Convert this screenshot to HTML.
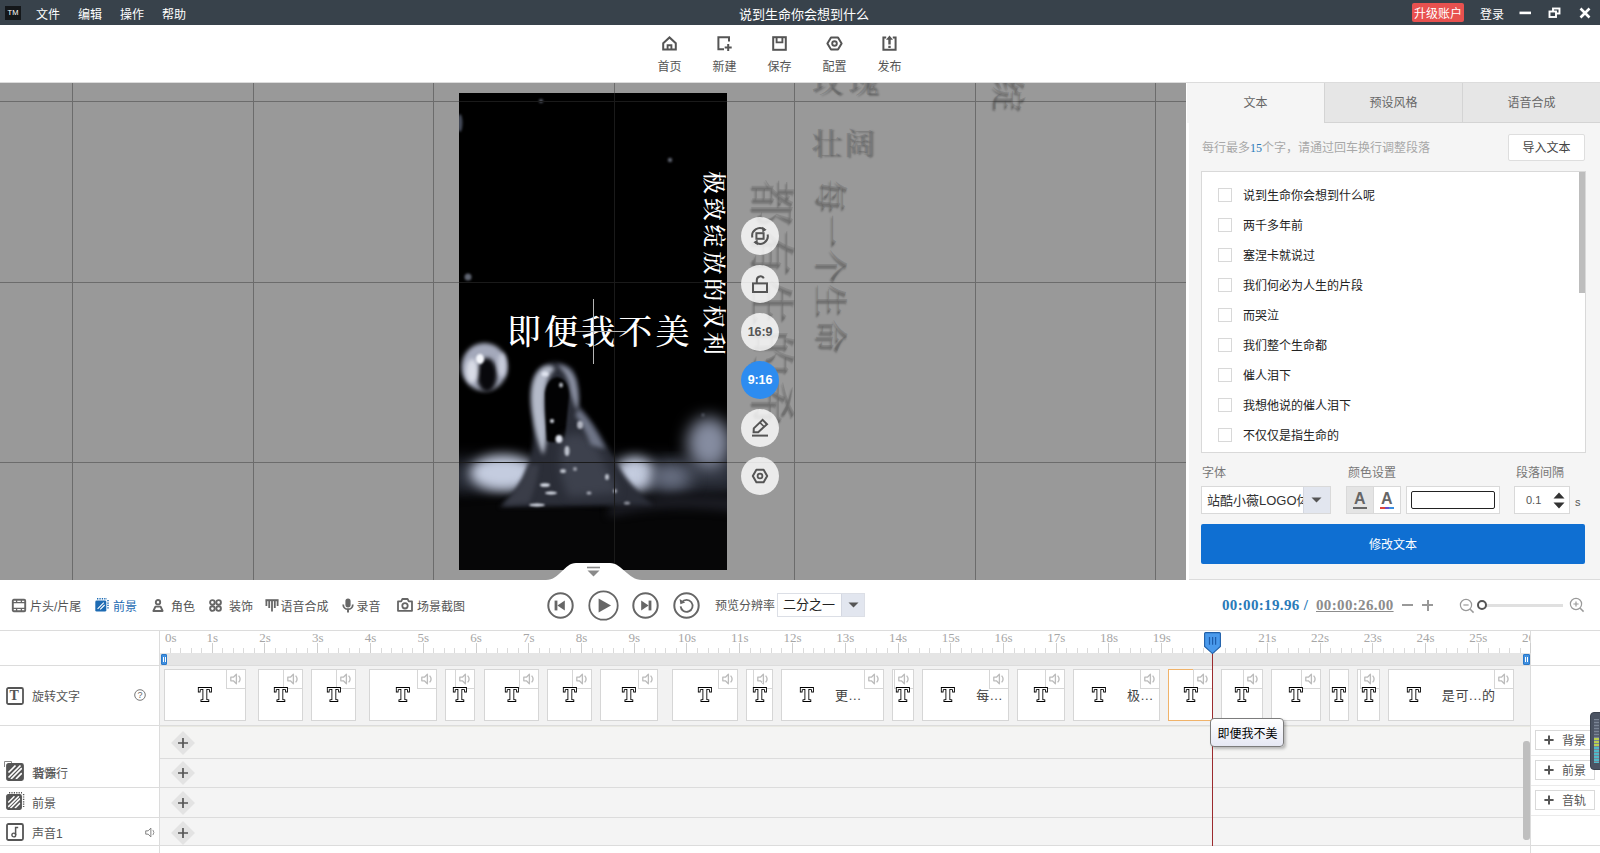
<!DOCTYPE html>
<html lang="zh-CN">
<head>
<meta charset="utf-8">
<title>说到生命你会想到什么</title>
<style>
*{box-sizing:border-box;margin:0;padding:0}
html,body{width:1600px;height:853px;overflow:hidden;background:#fff}
body{position:relative;font-family:"Liberation Sans","Noto Sans CJK SC",sans-serif;font-size:12px;color:#555;line-height:1}
.abs{position:absolute}
.t{position:absolute;white-space:nowrap;line-height:1}
svg{position:absolute;overflow:visible}
/* title bar */
#titlebar{position:absolute;left:0;top:0;width:1600px;height:25px;background:#38424b}
#titlebar .t{color:#fff;font-size:12px;top:8.5px}
#logo{position:absolute;left:5px;top:6px;width:16px;height:14px;background:#14171a;color:#fff;font-size:7.5px;text-align:center;line-height:14px;letter-spacing:.2px;font-family:"Liberation Sans",sans-serif}
#upgrade{position:absolute;left:1412px;top:3px;width:52px;height:19px;background:#e8514f;border-radius:2px;color:#fff;font-size:12px;line-height:22px;text-align:center}
/* main toolbar */
#toolbar{position:absolute;left:0;top:25px;width:1600px;height:58px;background:#fff;border-bottom:1px solid #dcdcdc}
.tb{position:absolute;top:0;width:55px;height:57px;text-align:center}
.tb svg{left:19px;top:10px;width:17px;height:17px}
.tb span{position:absolute;left:0;width:55px;top:36px;font-size:12px;color:#555;text-align:center}
/* stage */
#stage{position:absolute;left:0;top:83px;width:1186px;height:497px;background:#999;overflow:hidden}
#canvas{position:absolute;left:459px;top:10px;width:268px;height:477px;background:#000;overflow:hidden}
.rb{position:absolute;left:741px;width:38px;height:38px;border-radius:50%;background:rgba(255,255,255,.8)}
.rb svg{left:9px;top:9px;width:20px;height:20px}
.rb.txt{font-family:"Liberation Sans",sans-serif;font-weight:bold;font-size:12.5px;color:#555;text-align:center;line-height:39px;letter-spacing:-.1px}
.rb.on{background:#2d8cf0;color:#fff}
.ghost{position:absolute;white-space:nowrap;line-height:1;color:rgba(70,70,70,.22);font-family:"Liberation Serif","Noto Serif CJK SC",serif;text-shadow:2px 1px 2px rgba(0,0,0,.28);font-weight:500}
/* right panel */
#panel{position:absolute;left:1187px;top:83px;width:413px;height:497px;background:#f5f5f5;box-shadow:inset 2px 0 0 #fff,inset 0 -1px 0 #dcdcdc}
.tab{position:absolute;top:0;height:40px;font-size:12px;color:#666;text-align:center;line-height:40px;background:#e6e6e6;border-bottom:1px solid #d4d4d4;border-left:1px solid #d4d4d4}
.tab.on{background:#f5f5f5;border-bottom:none;border-left:none}
#list{position:absolute;left:14px;top:88px;width:385px;height:282px;background:#fff;border:1px solid #d9d9d9;overflow:hidden}
.li{position:absolute;left:0;height:30px;width:370px}
.li i{position:absolute;left:16px;top:9px;width:14px;height:14px;border:1px solid #d8d8d8;background:#fff}
.li span{position:absolute;left:41px;top:9.5px;font-size:12px;color:#222;white-space:nowrap;line-height:14px}
.lab{position:absolute;font-size:12px;color:#777;white-space:nowrap}
.box{position:absolute;background:#fff;border:1px solid #d9d9d9}
/* bottom toolbar */
#btm{position:absolute;left:0;top:580px;width:1600px;height:51px;background:#fff}
#btm .t{font-size:13px;color:#555;top:20.5px}
/* timeline */
#tl{position:absolute;left:0;top:630px;width:1600px;height:223px;background:#fff}
.hl{position:absolute;height:1px;background:#dcdcdc}
.vl{position:absolute;width:1px;background:#dcdcdc}
.rl{position:absolute;top:0px;font-family:"Liberation Serif",serif;font-size:13px;color:#a6a6a6;white-space:nowrap;line-height:13px}
.clip{position:absolute;top:39px;height:52px;background:#fff;border:1px solid #d6d6d6}
.clip.sel{border-color:#f0b36a}
.clip .sp{position:absolute;right:-1px;top:-1px;width:20px;height:20px;border:1px solid #d6d6d6;background:#fff}
.clip .sp svg{left:3px;top:3px;width:12px;height:12px}
.clip .T{position:absolute;top:15.5px;transform:scaleX(.98);width:16px;height:18px;font-family:'Liberation Serif',serif;font-weight:bold;font-size:19.5px;line-height:18px;text-align:center;color:#fff;-webkit-text-stroke:1.9px #000;paint-order:stroke fill;z-index:2}
.clip .ct{position:absolute;top:19px;font-size:13px;color:#444;white-space:nowrap;line-height:14px;letter-spacing:.7px}
.gap{position:absolute;top:36px;height:58px;background:#f7f7f7}
.trk{position:absolute;left:160px;width:1370px;background:#f4f4f4}
.plus{position:absolute;left:171px;width:24px;height:24px}
.tlab{position:absolute;left:32px;font-size:12px;color:#555;white-space:nowrap}
.addb{position:absolute;left:1535px;width:60px;height:20px;border:1px solid #d9d9d9;background:#fff;font-size:12px;color:#555}
.addb span{position:absolute;left:26px;top:4px}
</style>
</head>
<body>
<!-- TITLE BAR -->
<div id="titlebar">
  <div id="logo">TM</div>
  <div class="t" style="left:36px">文件</div>
  <div class="t" style="left:78px">编辑</div>
  <div class="t" style="left:120px">操作</div>
  <div class="t" style="left:162px">帮助</div>
  <div class="t" style="left:739px;font-size:13px;top:8px">说到生命你会想到什么</div>
  <div id="upgrade">升级账户</div>
  <div class="t" style="left:1480px">登录</div>
  <svg style="left:1519px;top:11px;width:13px;height:4px" viewBox="0 0 13 4"><rect x="0.5" y="0.6" width="11.5" height="2.6" fill="#fff"/></svg>
  <svg style="left:1548px;top:7px;width:13px;height:12px" viewBox="0 0 13 12"><rect x="5" y="1.5" width="6.5" height="5" fill="none" stroke="#fff" stroke-width="1.9"/><rect x="1.5" y="4.5" width="6.5" height="5.5" fill="#38424b" stroke="#fff" stroke-width="1.9"/></svg>
  <svg style="left:1579px;top:7px;width:12px;height:12px" viewBox="0 0 12 12"><path d="M1.5 1.5 L10.5 10.5 M10.5 1.5 L1.5 10.5" stroke="#fff" stroke-width="2.6" fill="none"/></svg>
</div>
<!-- MAIN TOOLBAR -->
<div id="toolbar">
  <div class="tb" style="left:642px">
    <svg viewBox="0 0 17 17"><path d="M2.2 8.2 L8.5 2.4 L14.8 8.2 V14.6 H2.2 Z" fill="none" stroke="#555" stroke-width="2" stroke-linejoin="miter"/><path d="M6.6 14.6 V10.2 H10.4 V14.6" fill="none" stroke="#555" stroke-width="1.9"/></svg>
    <span>首页</span></div>
  <div class="tb" style="left:697px">
    <svg viewBox="0 0 17 17"><path d="M13 6.5 V2.2 H2.4 V14.2 H8" fill="none" stroke="#555" stroke-width="2"/><path d="M12.2 9 V16 M8.7 12.5 H15.7" fill="none" stroke="#555" stroke-width="2"/></svg>
    <span>新建</span></div>
  <div class="tb" style="left:752px">
    <svg viewBox="0 0 17 17"><rect x="2.2" y="2.2" width="12.6" height="12.6" fill="none" stroke="#555" stroke-width="2"/><path d="M5.6 2.4 V7.4 H11.4 V2.4" fill="none" stroke="#555" stroke-width="1.9"/></svg>
    <span>保存</span></div>
  <div class="tb" style="left:807px">
    <svg viewBox="0 0 17 17"><path d="M5 2.4 H12 L15.6 8.5 L12 14.6 H5 L1.4 8.5 Z" fill="none" stroke="#555" stroke-width="2" stroke-linejoin="round"/><circle cx="8.5" cy="8.5" r="2.3" fill="none" stroke="#555" stroke-width="1.9"/></svg>
    <span>配置</span></div>
  <div class="tb" style="left:862px">
    <svg viewBox="0 0 17 17"><path d="M5.2 2.4 H2.4 V14.8 H14.6 V2.4 H11.8" fill="none" stroke="#555" stroke-width="2"/><path d="M8.5 0.4 L12 4.8 H9.7 V9.4 H7.3 V4.8 H5 Z" fill="#555"/><rect x="7.3" y="10.8" width="2.4" height="2.2" fill="#555"/></svg>
    <span>发布</span></div>
</div>
<!-- STAGE -->
<div id="stage">
  <!-- grid -->
  <svg style="left:0;top:0;width:1187px;height:497px" viewBox="0 0 1187 497">
        <g stroke="#6c6c6c" stroke-width="1" shape-rendering="crispEdges">
      <path d="M72.5 0V497M253.5 0V497M433.5 0V497M614.5 0V497M794.5 0V497M975.5 0V497M1155.5 0V497M0 18.5H1187M0 199.5H1187M0 379.5H1187"/>
    </g>
  </svg>
  <!-- ghost texts -->
  <div class="ghost" style="left:812px;top:-16px;font-size:30px;letter-spacing:6px">玫瑰</div>
  <div class="ghost" style="left:912px;top:-24px;font-size:34px">一</div>
  <div class="ghost" style="left:1024px;top:-6px;font-size:34px;transform-origin:0 0;transform:rotate(90deg)">绽</div>
  <div class="ghost" style="left:811px;top:46px;font-size:30px;letter-spacing:3px">壮阔</div>
  <div class="ghost" style="left:846px;top:96px;font-size:33px;letter-spacing:2px;transform-origin:0 0;transform:rotate(90deg)">每一个生命</div>
  <div class="ghost" style="left:794px;top:96px;font-size:46px;letter-spacing:4px;opacity:.85;transform-origin:0 0;transform:rotate(90deg)">都有生的希</div>
  <!-- canvas -->
  <div id="canvas">
    <svg style="left:0;top:0;width:268px;height:477px" viewBox="0 0 268 477">
      <defs>
        <filter color-interpolation-filters="sRGB" id="b2" x="-30%" y="-30%" width="160%" height="160%"><feGaussianBlur stdDeviation="2"/></filter>
        <filter color-interpolation-filters="sRGB" id="b4" x="-30%" y="-30%" width="160%" height="160%"><feGaussianBlur stdDeviation="4"/></filter>
        <filter color-interpolation-filters="sRGB" id="b6" x="-50%" y="-50%" width="200%" height="200%"><feGaussianBlur stdDeviation="6"/></filter>
        <filter color-interpolation-filters="sRGB" id="b8" x="-50%" y="-50%" width="200%" height="200%"><feGaussianBlur stdDeviation="8"/></filter>
        <filter color-interpolation-filters="sRGB" id="b1" x="-30%" y="-30%" width="160%" height="160%"><feGaussianBlur stdDeviation="1"/></filter>
        <linearGradient id="sp" x1="0" y1="0" x2="0" y2="1"><stop offset="0" stop-color="#aeb4c4"/><stop offset=".45" stop-color="#5a5f6e"/><stop offset="1" stop-color="#23252c"/></linearGradient>
      </defs>
      <rect width="268" height="477" fill="#000"/>
      <!-- bokeh band -->
      <rect x="-10" y="366" width="290" height="34" fill="#2c303b" filter="url(#b8)"/>
      <ellipse cx="44" cy="380" rx="33" ry="18" fill="#c4ccdf" filter="url(#b6)"/>
      <ellipse cx="176" cy="381" rx="20" ry="17" fill="#c4ccdf" filter="url(#b6)"/>
      <ellipse cx="212" cy="384" rx="20" ry="13" fill="#6a7184" filter="url(#b8)"/>
      <ellipse cx="250" cy="350" rx="22" ry="26" fill="#858ca0" filter="url(#b8)"/>
      <!-- bottom water surface -->
      <path d="M-10 410 Q60 400 130 412 T280 404 V490 H-10Z" fill="#060607" filter="url(#b4)"/>
      <path d="M150 412 Q210 398 280 404 V420 Q210 410 150 424Z" fill="#1b1c23" filter="url(#b4)"/>
      <!-- spout body -->
      <path d="M72 316 Q68 280 84 272 Q100 264 114 276 Q122 290 120 312 Q136 330 148 352 Q164 388 194 412 L40 414 Q60 398 68 376 Q78 350 72 316Z" fill="#2b2e38" filter="url(#b2)"/>
      <path d="M73 318 Q69 284 84 274 Q92 270 96 276 Q84 286 86 318 Q90 346 84 362 Q76 344 73 318Z" fill="#b4bac9" filter="url(#b2)"/>
      <path d="M98 272 Q112 272 117 288 Q121 306 118 318 Q112 304 110 290 Q106 278 98 272Z" fill="#8a90a2" filter="url(#b2)"/>
      <path d="M86 300 Q88 286 98 284 Q110 286 110 304 L106 344 Q96 352 88 348 Q86 326 86 300Z" fill="#020203" filter="url(#b1)"/>
      <path d="M104 344 Q124 334 138 354 Q150 380 160 400 L110 404 Q96 380 104 344Z" fill="#3d414d" filter="url(#b4)"/>
      <path d="M120 316 Q134 330 146 356 L132 352 Q124 332 116 322Z" fill="#6f7587" filter="url(#b2)"/>
      <path d="M70 372 Q60 398 44 412 L70 410 Q78 392 80 372Z" fill="#3a3d48" filter="url(#b2)"/>
      <g fill="#dfe3ee" filter="url(#b1)">
        <ellipse cx="86" cy="281" rx="3.5" ry="2.5"/><ellipse cx="102" cy="292" rx="2" ry="2.5" opacity=".8"/><ellipse cx="93" cy="328" rx="2" ry="2"/>
        <ellipse cx="100" cy="346" rx="3.5" ry="4"/><ellipse cx="108" cy="358" rx="2.5" ry="5" opacity=".8"/><ellipse cx="121" cy="332" rx="3" ry="4" opacity=".7"/>
        <ellipse cx="86" cy="392" rx="5" ry="1.8"/><ellipse cx="92" cy="400" rx="6" ry="1.5"/><ellipse cx="78" cy="412" rx="8" ry="1.4"/>
        <ellipse cx="104" cy="378" rx="3" ry="2" opacity=".8"/><ellipse cx="148" cy="384" rx="2" ry="3" opacity=".8"/><ellipse cx="156" cy="398" rx="2" ry="2" opacity=".7"/>
        <ellipse cx="130" cy="400" rx="2.5" ry="1.5" opacity=".7"/><ellipse cx="168" cy="410" rx="3" ry="1.5" opacity=".6"/><ellipse cx="116" cy="376" rx="2" ry="2" opacity=".6"/>
      </g>
      <!-- droplet -->
      <ellipse cx="25.5" cy="274" rx="23" ry="24" fill="#a4a9bb" filter="url(#b2)"/>
      <ellipse cx="28" cy="282" rx="10" ry="17" fill="#08080c" filter="url(#b2)"/>
      <ellipse cx="13" cy="278" rx="6" ry="12" fill="#d9dce6" filter="url(#b2)"/>
      <ellipse cx="43" cy="272" rx="4" ry="12" fill="#c9cddb" filter="url(#b2)"/>
      <ellipse cx="21" cy="266" rx="4" ry="5" fill="#f4f6fb" filter="url(#b1)"/>
      <!-- specks -->
      <g fill="#5f6470" filter="url(#b1)"><circle cx="82" cy="8" r="2"/><circle cx="211" cy="67" r="2.2"/><circle cx="9" cy="184" r="3.5"/><circle cx="244" cy="322" r="1.5"/><ellipse cx="1" cy="30" rx="2.5" ry="9" fill="#444a58"/></g>
      <!-- grid over canvas -->
      <g stroke="#1a1a1a" stroke-width="1" shape-rendering="crispEdges"><path d="M155.5 0V477M0 8.5H268M0 189.5H268M0 369.5H268"/></g>
    </svg>
    <div class="t" style="left:48px;top:223px;font-family:'Liberation Serif','Noto Serif CJK SC',serif;font-size:34px;letter-spacing:3.1px;color:#fff;font-weight:500">即便我不美</div>
    <div class="abs" style="left:134px;top:206px;width:1px;height:65px;background:#b5b5b5"></div>
    <div class="abs" style="left:113px;top:238px;width:54px;height:1px;background:#b5b5b5"></div>
    <div class="t" style="left:266px;top:78px;font-family:'Liberation Serif','Noto Serif CJK SC',serif;font-size:23px;letter-spacing:3.8px;color:#fff;font-weight:500;transform-origin:0 0;transform:rotate(90deg)">极致绽放的权利</div>
  </div>
  <!-- round buttons -->
  <div class="rb" style="top:134px"><svg viewBox="0 0 20 20"><path d="M2.4 11.6 A7.7 7.7 0 0 1 14.4 3.6" fill="none" stroke="#555" stroke-width="2"/><path d="M17.6 8.4 A7.7 7.7 0 0 1 5.6 16.4" fill="none" stroke="#555" stroke-width="2"/><path d="M12.2 0.8 L16.6 3.8 L12.4 6.6Z M7.8 19.2 L3.4 16.2 L7.6 13.4Z" fill="#555"/><rect x="6.4" y="7.2" width="7.2" height="5.6" fill="none" stroke="#555" stroke-width="2"/></svg></div>
  <div class="rb" style="top:182px"><svg viewBox="0 0 20 20"><rect x="3" y="9.4" width="14" height="8.6" fill="none" stroke="#555" stroke-width="2"/><path d="M6.8 9.4 V6 A3.7 3.7 0 0 1 13.8 4.4" fill="none" stroke="#555" stroke-width="2"/></svg></div>
  <div class="rb txt" style="top:230px">16:9</div>
  <div class="rb txt on" style="top:278px">9:16</div>
  <div class="rb" style="top:326px"><svg viewBox="0 0 20 20"><path d="M3.6 14.2 L3.8 10.4 L12.6 1.8 L17 6.2 L8.2 14.2 Z" fill="none" stroke="#555" stroke-width="2" stroke-linejoin="miter"/><path d="M10 4.6 L14.2 8.8" stroke="#555" stroke-width="1.6"/><path d="M2 17.6 H18" stroke="#555" stroke-width="2"/></svg></div>
  <div class="rb" style="top:374px"><svg viewBox="0 0 20 20"><path d="M6.4 3.8 H13.6 L17.2 10 L13.6 16.2 H6.4 L2.8 10 Z" fill="none" stroke="#555" stroke-width="2" stroke-linejoin="round"/><circle cx="10" cy="10" r="2.4" fill="none" stroke="#555" stroke-width="1.8"/></svg></div>
  <!-- notch -->
  <svg style="left:546px;top:479px;width:96px;height:18px" viewBox="0 0 96 18"><path d="M0 18 C14 18 18 1 30 1 H64 C76 1 82 18 96 18 Z" fill="#fff"/><path d="M41 5.5 H54" stroke="#8a8a8a" stroke-width="1.6"/><path d="M41.5 8.5 H53.5 L47.5 14.5 Z" fill="#8a8a8a"/></svg>
</div>
<!-- RIGHT PANEL -->
<div id="panel">
  <div class="tab on" style="left:0;width:137px">文本</div>
  <div class="tab" style="left:137px;width:138px">预设风格</div>
  <div class="tab" style="left:275px;width:138px">语音合成</div>
  <div class="t" style="left:15px;top:59px;font-size:12px;color:#a8a8a8">每行最多<span style="color:#2a7ab8;font-family:'Liberation Serif',serif">15</span>个字，请通过回车换行调整段落</div>
  <div class="box" style="left:321px;top:51px;width:77px;height:27px;border-color:#dedede;border-radius:2px;font-size:12px;color:#444;text-align:center;line-height:26px">导入文本</div>
  <div id="list">
    <div class="li" style="top:7px"><i></i><span>说到生命你会想到什么呢</span></div>
    <div class="li" style="top:37px"><i></i><span>两千多年前</span></div>
    <div class="li" style="top:67px"><i></i><span>塞涅卡就说过</span></div>
    <div class="li" style="top:97px"><i></i><span>我们何必为人生的片段</span></div>
    <div class="li" style="top:127px"><i></i><span>而哭泣</span></div>
    <div class="li" style="top:157px"><i></i><span>我们整个生命都</span></div>
    <div class="li" style="top:187px"><i></i><span>催人泪下</span></div>
    <div class="li" style="top:217px"><i></i><span>我想他说的催人泪下</span></div>
    <div class="li" style="top:247px"><i></i><span>不仅仅是指生命的</span></div>
    <div class="abs" style="left:377px;top:0;width:6px;height:121px;background:#bdbdbd"></div>
  </div>
  <div class="lab" style="left:15px;top:384px">字体</div>
  <div class="lab" style="left:161px;top:384px">颜色设置</div>
  <div class="lab" style="left:329px;top:384px">段落间隔</div>
  <!-- font combo -->
  <div class="box" style="left:14px;top:403px;width:130px;height:28px;overflow:hidden">
    <div class="t" style="left:5px;top:7px;font-size:13px;color:#333">站酷小薇LOGO体</div>
    <div class="abs" style="left:101px;top:-1px;width:28px;height:28px;background:#e2e6ef;border-left:1px solid #d4d8e2"></div>
    <svg style="left:109px;top:10px;width:11px;height:6px" viewBox="0 0 11 6"><path d="M0.5 0.5 H10.5 L5.5 5.5Z" fill="#555"/></svg>
  </div>
  <!-- A buttons -->
  <div class="box" style="left:159px;top:403px;width:55px;height:28px">
    <div class="abs" style="left:0;top:0;width:27px;height:26px;background:#e4e4e4;border-right:1px solid #d9d9d9"></div>
    <div class="t" style="left:7px;top:4px;font-size:16px;font-weight:bold;color:#666;font-family:'Liberation Sans',sans-serif">A</div>
    <div class="abs" style="left:6px;top:20px;width:14px;height:2px;background:#666"></div>
    <div class="t" style="left:34px;top:4px;font-size:16px;font-weight:bold;color:#666;font-family:'Liberation Sans',sans-serif">A</div>
    <div class="abs" style="left:33px;top:20px;width:14px;height:2px;background:linear-gradient(90deg,#e0453a 0 33%,#6b4fc8 33% 66%,#3a8ee0 66%)"></div>
  </div>
  <!-- color box -->
  <div class="box" style="left:219px;top:403px;width:94px;height:28px"><div class="abs" style="left:4px;top:4px;width:84px;height:18px;border:1.5px solid #222;border-radius:2px;background:#fff"></div></div>
  <!-- spinner -->
  <div class="box" style="left:327px;top:403px;width:56px;height:28px">
    <div class="t" style="left:11px;top:8px;font-size:11px;color:#555;font-family:'Liberation Sans',sans-serif">0.1</div>
    <svg style="left:38px;top:5px;width:12px;height:17px" viewBox="0 0 12 17"><path d="M6 0.5 L11.5 6.5 H0.5Z M6 16.5 L11.5 10.5 H0.5Z" fill="#333"/></svg>
  </div>
  <div class="t" style="left:388px;top:414px;font-size:11px;color:#555">s</div>
  <!-- blue button -->
  <div class="abs" style="left:14px;top:441px;width:384px;height:40px;background:#0f6fd2;border-radius:2px;color:#fff;font-size:12px;text-align:center;line-height:42px">修改文本</div>
</div>
<!-- BOTTOM TOOLBAR -->
<div id="btm">
  <!-- film -->
  <svg style="left:12px;top:19px;width:14px;height:13px" viewBox="0 0 14 13"><rect x="0.8" y="0.8" width="12.4" height="11.4" rx="1" fill="none" stroke="#666" stroke-width="1.9"/><path d="M1 3.6 H13 M1 9.4 H13" stroke="#666" stroke-width="1.4"/><path d="M4.6 1 V3.6 M9.4 1 V3.6 M4.6 9.4 V12 M9.4 9.4 V12" stroke="#666" stroke-width="1.3"/></svg>
  <div class="t" style="left:30px;font-size:12px">片头/片尾</div>
  <!-- foreground (blue) -->
  <svg style="left:95px;top:18px;width:14px;height:14px" viewBox="0 0 14 14"><rect x="0.3" y="2.6" width="11" height="11" rx="1.4" fill="#1d6bb3"/><path d="M2.6 10.8 L8.8 4.6 M5.2 11.4 L9.6 7" stroke="#fff" stroke-width="1.1"/><path d="M2 0.8 H12" stroke="#1d6bb3" stroke-width="1.5" stroke-dasharray="1.3 1.1"/><path d="M13 2 V11" stroke="#1d6bb3" stroke-width="1.5" stroke-dasharray="1.3 1.1"/></svg>
  <div class="t" style="left:113px;font-size:12px;color:#1d6bb3">前景</div>
  <!-- role -->
  <svg style="left:152px;top:19px;width:12px;height:13px" viewBox="0 0 12 13"><circle cx="6" cy="3.2" r="2.2" fill="none" stroke="#666" stroke-width="1.9"/><path d="M3.4 7.6 H8.6 L10.6 12 H1.4 Z" fill="none" stroke="#666" stroke-width="1.9" stroke-linejoin="round"/></svg>
  <div class="t" style="left:171px;font-size:12px">角色</div>
  <!-- decor -->
  <svg style="left:209px;top:19px;width:13px;height:13px" viewBox="0 0 13 13"><g fill="none" stroke="#666" stroke-width="1.9"><circle cx="3.4" cy="3.4" r="2.3"/><circle cx="9.6" cy="3.4" r="2.3"/><circle cx="3.4" cy="9.6" r="2.3"/><circle cx="9.6" cy="9.6" r="2.3"/></g></svg>
  <div class="t" style="left:229px;font-size:12px">装饰</div>
  <!-- tts -->
  <svg style="left:265px;top:19px;width:14px;height:13px" viewBox="0 0 14 13"><path d="M0.4 1.2 H13.6" stroke="#666" stroke-width="2"/><path d="M1.4 2 V7 M4.2 2 V9 M7 2 V12.6 M9.8 2 V9 M12.6 2 V7" stroke="#666" stroke-width="1.8"/></svg>
  <div class="t" style="left:280.5px;font-size:12px">语音合成</div>
  <!-- mic -->
  <svg style="left:342px;top:18px;width:12px;height:15px" viewBox="0 0 12 15"><rect x="3.4" y="0.4" width="5.2" height="9" rx="2.6" fill="#666"/><path d="M1.2 6.4 A4.8 4.8 0 0 0 10.8 6.4" fill="none" stroke="#666" stroke-width="1.8"/><path d="M6 11.2 V14.6" stroke="#666" stroke-width="1.9"/></svg>
  <div class="t" style="left:356.5px;font-size:12px">录音</div>
  <!-- camera -->
  <svg style="left:397px;top:18px;width:16px;height:14px" viewBox="0 0 16 14"><path d="M1 3.4 H4.2 L5.4 1 H10.6 L11.8 3.4 H15 V12.8 H1 Z" fill="none" stroke="#666" stroke-width="1.8" stroke-linejoin="round"/><circle cx="8" cy="7.8" r="2.7" fill="none" stroke="#666" stroke-width="1.8"/></svg>
  <div class="t" style="left:417px;font-size:12px">场景截图</div>
  <!-- playback -->
  <svg style="left:547px;top:12px;width:27px;height:27px" viewBox="0 0 27 27"><circle cx="13.5" cy="13.5" r="12.2" fill="none" stroke="#666" stroke-width="2"/><rect x="7.6" y="8.6" width="2.8" height="9.8" fill="#666"/><path d="M17.8 8.6 V18.4 L10.4 13.5Z" fill="#666"/></svg>
  <svg style="left:588px;top:10px;width:31px;height:31px" viewBox="0 0 31 31"><circle cx="15.5" cy="15.5" r="14.2" fill="none" stroke="#666" stroke-width="1.8"/><path d="M10.6 8.6 V22.4 L23 15.5Z" fill="#666"/></svg>
  <svg style="left:632px;top:12px;width:27px;height:27px" viewBox="0 0 27 27"><circle cx="13.5" cy="13.5" r="12.2" fill="none" stroke="#666" stroke-width="2"/><rect x="16.6" y="8.6" width="2.8" height="9.8" fill="#666"/><path d="M9.2 8.6 V18.4 L16.6 13.5Z" fill="#666"/></svg>
  <svg style="left:673px;top:12px;width:27px;height:27px" viewBox="0 0 27 27"><circle cx="13.5" cy="13.5" r="12.2" fill="none" stroke="#666" stroke-width="2"/><path d="M8.8 10.2 A6 6 0 1 1 7.6 14.4" fill="none" stroke="#666" stroke-width="1.8"/><path d="M6.6 7 L7.4 12.2 L12.2 10.6Z" fill="#666"/></svg>
  <div class="t" style="left:715px;font-size:12px;top:20px">预览分辨率</div>
  <div class="box" style="left:777px;top:13px;width:88px;height:24px;border-color:#dcdfe6;overflow:hidden">
    <div class="t" style="left:5px;top:4px;font-size:13px;color:#222">二分之一</div>
    <div class="abs" style="left:63px;top:-1px;width:24px;height:24px;background:#e2e6ef;border-left:1px solid #d4d8e2"></div>
    <svg style="left:70px;top:8px;width:11px;height:6px" viewBox="0 0 11 6"><path d="M0.5 0.5 H10.5 L5.5 5.5Z" fill="#555"/></svg>
  </div>
  <!-- time -->
  <div class="t" style="left:1222px;top:18px;font-family:'Liberation Serif',serif;font-weight:bold;font-size:15px;color:#2a7ab8;letter-spacing:.35px">00:00:19.96 /</div>
  <div class="t" style="left:1316px;top:18px;font-family:'Liberation Serif',serif;font-weight:bold;font-size:15px;color:#8c8c8c;letter-spacing:.35px;text-decoration:underline">00:00:26.00</div>
  <div class="abs" style="left:1402px;top:24px;width:11px;height:2px;background:#999"></div>
  <div class="abs" style="left:1422px;top:24px;width:11px;height:2px;background:#999"></div>
  <div class="abs" style="left:1426.5px;top:19.5px;width:2px;height:11px;background:#999"></div>
  <svg style="left:1459px;top:18px;width:16px;height:16px" viewBox="0 0 16 16"><circle cx="7" cy="7" r="5.6" fill="none" stroke="#999" stroke-width="1.2"/><path d="M4.4 7 H9.6" stroke="#999" stroke-width="1.2"/><path d="M11.2 11.2 L14.6 14.6" stroke="#999" stroke-width="1.5"/></svg>
  <div class="abs" style="left:1486px;top:24px;width:77px;height:3px;background:#e0e0e0"></div>
  <div class="abs" style="left:1477px;top:20px;width:10px;height:10px;border-radius:50%;border:2px solid #555;background:#fff"></div>
  <svg style="left:1569px;top:17px;width:16px;height:16px" viewBox="0 0 16 16"><circle cx="7" cy="7" r="5.6" fill="none" stroke="#999" stroke-width="1.2"/><path d="M4.4 7 H9.6 M7 4.4 V9.6" stroke="#999" stroke-width="1.2"/><path d="M11.2 11.2 L14.6 14.6" stroke="#999" stroke-width="1.5"/></svg>
</div>
<!-- TIMELINE -->
<div id="tl">
<div class="abs" style="left:160px;top:23px;width:1370px;height:13px;background:#e5e5e5"></div>
<div class="trk" style="top:36px;height:60px;background:#f2f2f2"></div>
<div class="trk" style="top:96px;height:33px;background:#f4f4f3"></div>
<div class="trk" style="top:129px;height:29px"></div>
<div class="trk" style="top:158px;height:30px"></div>
<div class="trk" style="top:188px;height:28px"></div>
<div class="hl" style="left:0;top:0;width:1600px"></div>
<div class="hl" style="left:0;top:35px;width:1600px"></div>
<div class="hl" style="left:0;top:95px;width:1531px"></div>
<div class="hl" style="left:160px;top:96px;width:1370px;background:#e9e9e2"></div>
<div class="hl" style="left:160px;top:128px;width:1370px"></div>
<div class="hl" style="left:0;top:157px;width:1531px"></div>
<div class="hl" style="left:0;top:187px;width:1531px"></div>
<div class="hl" style="left:1531px;top:95px;width:69px;background:#ebebeb"></div>
<div class="hl" style="left:1531px;top:125px;width:69px;background:#ebebeb"></div>
<div class="hl" style="left:1531px;top:155px;width:69px;background:#ebebeb"></div>
<div class="hl" style="left:1531px;top:185px;width:69px;background:#ebebeb"></div>
<div class="hl" style="left:0;top:215px;width:1600px"></div>
<div class="vl" style="left:159px;top:0;height:223px;background:#dcdcdc"></div>
<div class="vl" style="left:1530px;top:0;height:223px"></div>
<svg style="left:0;top:0;width:1531px;height:24px" viewBox="0 0 1531 24"><path d="M170.5 18V23M180.5 18V23M191.5 18V23M201.5 18V23M222.5 18V23M233.5 18V23M243.5 18V23M254.5 18V23M275.5 18V23M286.5 18V23M296.5 18V23M307.5 18V23M328.5 18V23M338.5 18V23M349.5 18V23M359.5 18V23M381.5 18V23M391.5 18V23M402.5 18V23M412.5 18V23M433.5 18V23M444.5 18V23M454.5 18V23M465.5 18V23M486.5 18V23M497.5 18V23M507.5 18V23M518.5 18V23M539.5 18V23M549.5 18V23M560.5 18V23M570.5 18V23M592.5 18V23M602.5 18V23M613.5 18V23M623.5 18V23M644.5 18V23M655.5 18V23M665.5 18V23M676.5 18V23M697.5 18V23M708.5 18V23M718.5 18V23M729.5 18V23M750.5 18V23M760.5 18V23M771.5 18V23M781.5 18V23M803.5 18V23M813.5 18V23M824.5 18V23M834.5 18V23M855.5 18V23M866.5 18V23M876.5 18V23M887.5 18V23M908.5 18V23M919.5 18V23M929.5 18V23M940.5 18V23M961.5 18V23M971.5 18V23M982.5 18V23M992.5 18V23M1014.5 18V23M1024.5 18V23M1035.5 18V23M1045.5 18V23M1066.5 18V23M1077.5 18V23M1087.5 18V23M1098.5 18V23M1119.5 18V23M1130.5 18V23M1140.5 18V23M1151.5 18V23M1172.5 18V23M1182.5 18V23M1193.5 18V23M1203.5 18V23M1225.5 18V23M1235.5 18V23M1246.5 18V23M1256.5 18V23M1277.5 18V23M1288.5 18V23M1298.5 18V23M1309.5 18V23M1330.5 18V23M1341.5 18V23M1351.5 18V23M1362.5 18V23M1383.5 18V23M1393.5 18V23M1404.5 18V23M1414.5 18V23M1436.5 18V23M1446.5 18V23M1457.5 18V23M1467.5 18V23M1488.5 18V23M1499.5 18V23M1509.5 18V23M1520.5 18V23" stroke="#dadada" stroke-width="1" shape-rendering="crispEdges"/><path d="M212.5 13V23M264.5 13V23M317.5 13V23M370.5 13V23M423.5 13V23M476.5 13V23M528.5 13V23M581.5 13V23M634.5 13V23M686.5 13V23M739.5 13V23M792.5 13V23M845.5 13V23M898.5 13V23M950.5 13V23M1003.5 13V23M1056.5 13V23M1108.5 13V23M1161.5 13V23M1214.5 13V23M1267.5 13V23M1320.5 13V23M1372.5 13V23M1425.5 13V23M1478.5 13V23M1530.5 13V23" stroke="#cecece" stroke-width="1" shape-rendering="crispEdges"/></svg>
<div class="abs" style="left:161px;top:1px;width:1369px;height:18px;overflow:hidden">
<div class="rl" style="left:4px">0s</div>
<div class="rl" style="left:51.2px;width:40px;margin-left:-20px;text-align:center">1s</div>
<div class="rl" style="left:104.0px;width:40px;margin-left:-20px;text-align:center">2s</div>
<div class="rl" style="left:156.8px;width:40px;margin-left:-20px;text-align:center">3s</div>
<div class="rl" style="left:209.5px;width:40px;margin-left:-20px;text-align:center">4s</div>
<div class="rl" style="left:262.2px;width:40px;margin-left:-20px;text-align:center">5s</div>
<div class="rl" style="left:315.0px;width:40px;margin-left:-20px;text-align:center">6s</div>
<div class="rl" style="left:367.8px;width:40px;margin-left:-20px;text-align:center">7s</div>
<div class="rl" style="left:420.5px;width:40px;margin-left:-20px;text-align:center">8s</div>
<div class="rl" style="left:473.2px;width:40px;margin-left:-20px;text-align:center">9s</div>
<div class="rl" style="left:526.0px;width:40px;margin-left:-20px;text-align:center">10s</div>
<div class="rl" style="left:578.8px;width:40px;margin-left:-20px;text-align:center">11s</div>
<div class="rl" style="left:631.5px;width:40px;margin-left:-20px;text-align:center">12s</div>
<div class="rl" style="left:684.2px;width:40px;margin-left:-20px;text-align:center">13s</div>
<div class="rl" style="left:737.0px;width:40px;margin-left:-20px;text-align:center">14s</div>
<div class="rl" style="left:789.8px;width:40px;margin-left:-20px;text-align:center">15s</div>
<div class="rl" style="left:842.5px;width:40px;margin-left:-20px;text-align:center">16s</div>
<div class="rl" style="left:895.2px;width:40px;margin-left:-20px;text-align:center">17s</div>
<div class="rl" style="left:948.0px;width:40px;margin-left:-20px;text-align:center">18s</div>
<div class="rl" style="left:1000.8px;width:40px;margin-left:-20px;text-align:center">19s</div>
<div class="rl" style="left:1106.2px;width:40px;margin-left:-20px;text-align:center">21s</div>
<div class="rl" style="left:1159.0px;width:40px;margin-left:-20px;text-align:center">22s</div>
<div class="rl" style="left:1211.8px;width:40px;margin-left:-20px;text-align:center">23s</div>
<div class="rl" style="left:1264.5px;width:40px;margin-left:-20px;text-align:center">24s</div>
<div class="rl" style="left:1317.2px;width:40px;margin-left:-20px;text-align:center">25s</div>
<div class="rl" style="left:1370.0px;width:40px;margin-left:-20px;text-align:center">26s</div>
</div>
<div class="abs" style="left:161px;top:24px;width:6px;height:11px;background:#3f8fe0;border:1px solid #2a78c8;border-radius:1px"><i class="abs" style="left:1px;top:2px;width:1px;height:5px;background:#fff"></i><i class="abs" style="left:3px;top:2px;width:1px;height:5px;background:#fff"></i></div>
<div class="abs" style="left:1523px;top:24px;width:7px;height:11px;background:#3f8fe0;border:1px solid #2a78c8;border-radius:1px"><i class="abs" style="left:1px;top:2px;width:1px;height:5px;background:#fff"></i><i class="abs" style="left:3px;top:2px;width:1px;height:5px;background:#fff"></i></div>
<div class="clip" style="left:164px;width:82px"><b class="T" style="left:32.0px">T</b><div class="sp"><svg viewBox="0 0 12 12"><path d="M0.8 4.2 H3.4 L6.4 1.2 V10.8 L3.4 7.8 H0.8 Z" fill="none" stroke="#bcbcbc" stroke-width="1.3" stroke-linejoin="round"/><path d="M8.6 2.6 Q11.6 6 8.6 9.4" fill="none" stroke="#bcbcbc" stroke-width="1.3"/></svg></div></div>
<div class="clip" style="left:258px;width:45px"><b class="T" style="left:13.5px">T</b><div class="sp"><svg viewBox="0 0 12 12"><path d="M0.8 4.2 H3.4 L6.4 1.2 V10.8 L3.4 7.8 H0.8 Z" fill="none" stroke="#bcbcbc" stroke-width="1.3" stroke-linejoin="round"/><path d="M8.6 2.6 Q11.6 6 8.6 9.4" fill="none" stroke="#bcbcbc" stroke-width="1.3"/></svg></div></div>
<div class="clip" style="left:311px;width:45px"><b class="T" style="left:13.5px">T</b><div class="sp"><svg viewBox="0 0 12 12"><path d="M0.8 4.2 H3.4 L6.4 1.2 V10.8 L3.4 7.8 H0.8 Z" fill="none" stroke="#bcbcbc" stroke-width="1.3" stroke-linejoin="round"/><path d="M8.6 2.6 Q11.6 6 8.6 9.4" fill="none" stroke="#bcbcbc" stroke-width="1.3"/></svg></div></div>
<div class="clip" style="left:369px;width:68px"><b class="T" style="left:25.0px">T</b><div class="sp"><svg viewBox="0 0 12 12"><path d="M0.8 4.2 H3.4 L6.4 1.2 V10.8 L3.4 7.8 H0.8 Z" fill="none" stroke="#bcbcbc" stroke-width="1.3" stroke-linejoin="round"/><path d="M8.6 2.6 Q11.6 6 8.6 9.4" fill="none" stroke="#bcbcbc" stroke-width="1.3"/></svg></div></div>
<div class="clip" style="left:445px;width:30px"><b class="T" style="left:6.0px">T</b><div class="sp"><svg viewBox="0 0 12 12"><path d="M0.8 4.2 H3.4 L6.4 1.2 V10.8 L3.4 7.8 H0.8 Z" fill="none" stroke="#bcbcbc" stroke-width="1.3" stroke-linejoin="round"/><path d="M8.6 2.6 Q11.6 6 8.6 9.4" fill="none" stroke="#bcbcbc" stroke-width="1.3"/></svg></div></div>
<div class="clip" style="left:484px;width:55px"><b class="T" style="left:18.5px">T</b><div class="sp"><svg viewBox="0 0 12 12"><path d="M0.8 4.2 H3.4 L6.4 1.2 V10.8 L3.4 7.8 H0.8 Z" fill="none" stroke="#bcbcbc" stroke-width="1.3" stroke-linejoin="round"/><path d="M8.6 2.6 Q11.6 6 8.6 9.4" fill="none" stroke="#bcbcbc" stroke-width="1.3"/></svg></div></div>
<div class="clip" style="left:547px;width:45px"><b class="T" style="left:13.5px">T</b><div class="sp"><svg viewBox="0 0 12 12"><path d="M0.8 4.2 H3.4 L6.4 1.2 V10.8 L3.4 7.8 H0.8 Z" fill="none" stroke="#bcbcbc" stroke-width="1.3" stroke-linejoin="round"/><path d="M8.6 2.6 Q11.6 6 8.6 9.4" fill="none" stroke="#bcbcbc" stroke-width="1.3"/></svg></div></div>
<div class="clip" style="left:600px;width:58px"><b class="T" style="left:20.0px">T</b><div class="sp"><svg viewBox="0 0 12 12"><path d="M0.8 4.2 H3.4 L6.4 1.2 V10.8 L3.4 7.8 H0.8 Z" fill="none" stroke="#bcbcbc" stroke-width="1.3" stroke-linejoin="round"/><path d="M8.6 2.6 Q11.6 6 8.6 9.4" fill="none" stroke="#bcbcbc" stroke-width="1.3"/></svg></div></div>
<div class="clip" style="left:672px;width:66px"><b class="T" style="left:24.0px">T</b><div class="sp"><svg viewBox="0 0 12 12"><path d="M0.8 4.2 H3.4 L6.4 1.2 V10.8 L3.4 7.8 H0.8 Z" fill="none" stroke="#bcbcbc" stroke-width="1.3" stroke-linejoin="round"/><path d="M8.6 2.6 Q11.6 6 8.6 9.4" fill="none" stroke="#bcbcbc" stroke-width="1.3"/></svg></div></div>
<div class="clip" style="left:746px;width:27px"><b class="T" style="left:4.5px">T</b><div class="sp"><svg viewBox="0 0 12 12"><path d="M0.8 4.2 H3.4 L6.4 1.2 V10.8 L3.4 7.8 H0.8 Z" fill="none" stroke="#bcbcbc" stroke-width="1.3" stroke-linejoin="round"/><path d="M8.6 2.6 Q11.6 6 8.6 9.4" fill="none" stroke="#bcbcbc" stroke-width="1.3"/></svg></div></div>
<div class="clip" style="left:781px;width:103px"><b class="T" style="left:17.4px">T</b><span class="ct" style="left:53.0px">更...</span><div class="sp"><svg viewBox="0 0 12 12"><path d="M0.8 4.2 H3.4 L6.4 1.2 V10.8 L3.4 7.8 H0.8 Z" fill="none" stroke="#bcbcbc" stroke-width="1.3" stroke-linejoin="round"/><path d="M8.6 2.6 Q11.6 6 8.6 9.4" fill="none" stroke="#bcbcbc" stroke-width="1.3"/></svg></div></div>
<div class="clip" style="left:892px;width:22px"><b class="T" style="left:2.0px">T</b><div class="sp"><svg viewBox="0 0 12 12"><path d="M0.8 4.2 H3.4 L6.4 1.2 V10.8 L3.4 7.8 H0.8 Z" fill="none" stroke="#bcbcbc" stroke-width="1.3" stroke-linejoin="round"/><path d="M8.6 2.6 Q11.6 6 8.6 9.4" fill="none" stroke="#bcbcbc" stroke-width="1.3"/></svg></div></div>
<div class="clip" style="left:922px;width:87px"><b class="T" style="left:16.8px">T</b><span class="ct" style="left:53.3px">每...</span><div class="sp"><svg viewBox="0 0 12 12"><path d="M0.8 4.2 H3.4 L6.4 1.2 V10.8 L3.4 7.8 H0.8 Z" fill="none" stroke="#bcbcbc" stroke-width="1.3" stroke-linejoin="round"/><path d="M8.6 2.6 Q11.6 6 8.6 9.4" fill="none" stroke="#bcbcbc" stroke-width="1.3"/></svg></div></div>
<div class="clip" style="left:1017px;width:48px"><b class="T" style="left:15.0px">T</b><div class="sp"><svg viewBox="0 0 12 12"><path d="M0.8 4.2 H3.4 L6.4 1.2 V10.8 L3.4 7.8 H0.8 Z" fill="none" stroke="#bcbcbc" stroke-width="1.3" stroke-linejoin="round"/><path d="M8.6 2.6 Q11.6 6 8.6 9.4" fill="none" stroke="#bcbcbc" stroke-width="1.3"/></svg></div></div>
<div class="clip" style="left:1073px;width:87px"><b class="T" style="left:16.9px">T</b><span class="ct" style="left:53.0px">极...</span><div class="sp"><svg viewBox="0 0 12 12"><path d="M0.8 4.2 H3.4 L6.4 1.2 V10.8 L3.4 7.8 H0.8 Z" fill="none" stroke="#bcbcbc" stroke-width="1.3" stroke-linejoin="round"/><path d="M8.6 2.6 Q11.6 6 8.6 9.4" fill="none" stroke="#bcbcbc" stroke-width="1.3"/></svg></div></div>
<div class="clip sel" style="left:1168px;width:45px"><b class="T" style="left:13.5px">T</b><div class="sp"><svg viewBox="0 0 12 12"><path d="M0.8 4.2 H3.4 L6.4 1.2 V10.8 L3.4 7.8 H0.8 Z" fill="none" stroke="#bcbcbc" stroke-width="1.3" stroke-linejoin="round"/><path d="M8.6 2.6 Q11.6 6 8.6 9.4" fill="none" stroke="#bcbcbc" stroke-width="1.3"/></svg></div></div>
<div class="clip" style="left:1221px;width:42px"><b class="T" style="left:12.0px">T</b><div class="sp"><svg viewBox="0 0 12 12"><path d="M0.8 4.2 H3.4 L6.4 1.2 V10.8 L3.4 7.8 H0.8 Z" fill="none" stroke="#bcbcbc" stroke-width="1.3" stroke-linejoin="round"/><path d="M8.6 2.6 Q11.6 6 8.6 9.4" fill="none" stroke="#bcbcbc" stroke-width="1.3"/></svg></div></div>
<div class="clip" style="left:1271px;width:50px"><b class="T" style="left:16.0px">T</b><div class="sp"><svg viewBox="0 0 12 12"><path d="M0.8 4.2 H3.4 L6.4 1.2 V10.8 L3.4 7.8 H0.8 Z" fill="none" stroke="#bcbcbc" stroke-width="1.3" stroke-linejoin="round"/><path d="M8.6 2.6 Q11.6 6 8.6 9.4" fill="none" stroke="#bcbcbc" stroke-width="1.3"/></svg></div></div>
<div class="clip" style="left:1329px;width:20px"><b class="T" style="left:1.0px">T</b></div>
<div class="clip" style="left:1357px;width:23px"><b class="T" style="left:2.5px">T</b><div class="sp"><svg viewBox="0 0 12 12"><path d="M0.8 4.2 H3.4 L6.4 1.2 V10.8 L3.4 7.8 H0.8 Z" fill="none" stroke="#bcbcbc" stroke-width="1.3" stroke-linejoin="round"/><path d="M8.6 2.6 Q11.6 6 8.6 9.4" fill="none" stroke="#bcbcbc" stroke-width="1.3"/></svg></div></div>
<div class="clip" style="left:1388px;width:126px"><b class="T" style="left:17.0px">T</b><span class="ct" style="left:52.7px">是可...的</span><div class="sp"><svg viewBox="0 0 12 12"><path d="M0.8 4.2 H3.4 L6.4 1.2 V10.8 L3.4 7.8 H0.8 Z" fill="none" stroke="#bcbcbc" stroke-width="1.3" stroke-linejoin="round"/><path d="M8.6 2.6 Q11.6 6 8.6 9.4" fill="none" stroke="#bcbcbc" stroke-width="1.3"/></svg></div></div>
<svg class="plus" style="top:101px" viewBox="-1 -1 24 24"><path d="M11 -1 L23 11 L11 23 L-1 11Z" fill="#e3e3e3"/><path d="M6 11H16M11 6V16" stroke="#555" stroke-width="1.7"/></svg>
<svg class="plus" style="top:131px" viewBox="-1 -1 24 24"><path d="M11 -1 L23 11 L11 23 L-1 11Z" fill="#e3e3e3"/><path d="M6 11H16M11 6V16" stroke="#555" stroke-width="1.7"/></svg>
<svg class="plus" style="top:161px" viewBox="-1 -1 24 24"><path d="M11 -1 L23 11 L11 23 L-1 11Z" fill="#e3e3e3"/><path d="M6 11H16M11 6V16" stroke="#555" stroke-width="1.7"/></svg>
<svg class="plus" style="top:191px" viewBox="-1 -1 24 24"><path d="M11 -1 L23 11 L11 23 L-1 11Z" fill="#e3e3e3"/><path d="M6 11H16M11 6V16" stroke="#555" stroke-width="1.7"/></svg>
<svg style="left:6px;top:57px;width:18px;height:18px" viewBox="0 0 18 18"><rect x="1" y="1" width="16" height="16" rx="1.5" fill="none" stroke="#555" stroke-width="1.8"/></svg>
<div class="t" style="left:9.5px;top:59px;font-family:'Liberation Serif',serif;font-weight:bold;font-size:14px;color:#555">T</div>
<div class="tlab" style="top:60.5px">旋转文字</div>
<svg style="left:134px;top:59px;width:12px;height:12px" viewBox="0 0 12 12"><circle cx="6" cy="6" r="5.3" fill="none" stroke="#777" stroke-width="1"/></svg>
<div class="t" style="left:137.6px;top:60.5px;font-size:9px;color:#666;font-family:'Liberation Sans',sans-serif">?</div>
<svg style="left:4px;top:131px;width:8px;height:6px" viewBox="0 0 8 6"><path d="M0.5 6V0.5H7.5V3" fill="none" stroke="#888" stroke-width="1"/></svg>
<svg style="left:6px;top:133px;width:18px;height:18px" viewBox="0 0 18 18"><rect x="1" y="1" width="16" height="16" rx="1.5" fill="#555"/><path d="M2.5 9.5 L9.5 2.5 M2.5 14.5 L14.5 2.5 M5 16 L15.8 5.2 M10 16 L15.8 10.2" stroke="#fff" stroke-width="1.7"/><rect x="1" y="1" width="16" height="16" rx="1.5" fill="none" stroke="#555" stroke-width="1.8"/></svg>
<div class="tlab" style="top:138px">装饰行</div>
<div class="tlab" style="top:138px;left:33px">背景</div>
<svg style="left:6px;top:162px;width:19px;height:19px" viewBox="0 0 19 19"><g transform="translate(0,2) scale(.89)"><rect x="1" y="1" width="16" height="16" rx="1.5" fill="#555"/><path d="M2.5 9.5 L9.5 2.5 M2.5 14.5 L14.5 2.5 M5 16 L15.8 5.2 M10 16 L15.8 10.2" stroke="#fff" stroke-width="1.7"/><rect x="1" y="1" width="16" height="16" rx="1.5" fill="none" stroke="#555" stroke-width="1.8"/></g><path d="M3 0.8H16" stroke="#555" stroke-width="1.4" stroke-dasharray="1.2 1.2"/><path d="M17.6 2V15" stroke="#555" stroke-width="1.4" stroke-dasharray="1.2 1.2"/></svg>
<div class="tlab" style="top:168px">前景</div>
<svg style="left:6px;top:193px;width:18px;height:18px" viewBox="0 0 18 18"><rect x="1" y="1" width="16" height="16" rx="1.5" fill="none" stroke="#555" stroke-width="1.8"/><path d="M9.6 12 V4.4 H12.2" fill="none" stroke="#555" stroke-width="1.5"/><circle cx="7.8" cy="12" r="1.9" fill="none" stroke="#555" stroke-width="1.4"/></svg>
<div class="tlab" style="top:198px">声音1</div>
<svg style="left:145px;top:197px;width:11px;height:11px" viewBox="0 0 12 12"><path d="M0.8 4.2 H3.4 L6.4 1.2 V10.8 L3.4 7.8 H0.8 Z" fill="none" stroke="#777" stroke-width="1" stroke-linejoin="round"/><path d="M8.6 3.2 Q10.8 6 8.6 8.8" fill="none" stroke="#888" stroke-width="1"/></svg>
<div class="abs" style="left:1523px;top:111px;width:7px;height:99px;background:#bfbfbf;border-radius:3px"></div>
<div class="addb" style="top:100px"><svg style="left:8px;top:4px;width:10px;height:10px" viewBox="0 0 10 10"><path d="M0.4 5H9.6M5 0.4V9.6" stroke="#555" stroke-width="2"/></svg><span>背景</span></div>
<div class="addb" style="top:130px"><svg style="left:8px;top:4px;width:10px;height:10px" viewBox="0 0 10 10"><path d="M0.4 5H9.6M5 0.4V9.6" stroke="#555" stroke-width="2"/></svg><span>前景</span></div>
<div class="addb" style="top:160px"><svg style="left:8px;top:4px;width:10px;height:10px" viewBox="0 0 10 10"><path d="M0.4 5H9.6M5 0.4V9.6" stroke="#555" stroke-width="2"/></svg><span>音轨</span></div>
<div class="abs" style="left:1590px;top:82px;width:12px;height:58px;background:#4b5362;border-radius:4px 0 0 4px;border:1px solid #3b424e"><i class="abs" style="left:3px;top:6px;width:5px;height:44px;background:repeating-linear-gradient(180deg,#7a8494 0 1px,transparent 1px 3px),linear-gradient(180deg,#596172 0 40%,#b9cf4f 40% 62%,#4fb9c9 62%)"></i></div>
<div class="abs" style="left:1212px;top:22px;width:1px;height:194px;background:#9c2b2e"></div>
<svg style="left:1204px;top:2px;width:17px;height:22px" viewBox="0 0 17 22"><path d="M1.6 0.6 H15.4 Q16.4 0.6 16.4 1.6 V14.4 L8.5 21.6 L0.6 14.4 V1.6 Q0.6 0.6 1.6 0.6Z" fill="#4a9aec" stroke="#1f5fa8" stroke-width="1.1"/><path d="M5.5 5V12.8M8.6 5V12.8M11.6 5V12.8" stroke="#1d5cab" stroke-width="1.2"/></svg>
<div class="abs" style="left:1210px;top:88px;width:74px;height:29px;border:1px solid #7c7c7c;border-radius:4px;background:linear-gradient(180deg,#fff,#e6e8f4);box-shadow:2px 2px 3px rgba(0,0,0,.25)"><div class="t" style="left:6.5px;top:9px;font-size:12px;color:#000">即便我不美</div></div>
</div>
</body></html>
